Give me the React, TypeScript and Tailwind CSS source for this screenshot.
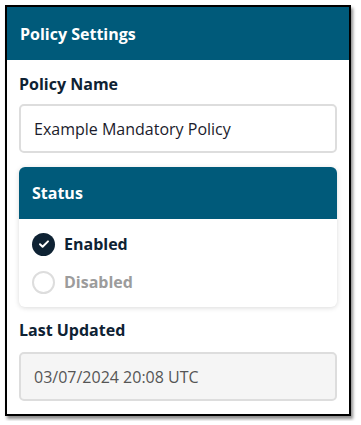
import { useState } from "react";

const font = { fontFamily: '"Open Sans", "Liberation Sans", sans-serif' };

const Radio = ({
  checked,
  label,
  onClick,
}: {
  checked: boolean;
  label: string;
  onClick: () => void;
}) => (
  <button onClick={onClick} className="flex items-center gap-[9px] h-6 outline-none">
    {checked ? (
      <span className="w-[23px] h-[23px] rounded-full bg-[#0e2233] flex items-center justify-center">
        <svg width="12" height="12" viewBox="0 0 12 12" fill="none">
          <path d="M2 6.2l2.6 2.6L10 3.4" stroke="white" strokeWidth="2" strokeLinecap="round" strokeLinejoin="round" />
        </svg>
      </span>
    ) : (
      <span className="w-[23px] h-[23px] rounded-full border-2 border-[#dddddd] bg-white" />
    )}
    <span className={`text-base font-bold ${checked ? "text-[#0e2233]" : "text-[#9c9c9c]"}`}>{label}</span>
  </button>
);

const App = () => {
  const [enabled, setEnabled] = useState(true);
  const [name, setName] = useState("Example Mandatory Policy");

  return (
    <div className="p-[5px] bg-white" style={font}>
      <div className="w-[346px] border-2 border-black bg-white shadow-[2px_3px_3px_rgba(0,0,0,0.45)]">
        <div className="h-[53px] bg-[#005a7a] px-[13px] flex items-center">
          <h2 className="text-white font-bold text-base">Policy Settings</h2>
        </div>
        <div className="px-[12px] pb-[13px]">
          <label className="block mt-[13px] text-base font-bold leading-[22px] text-[#0e2233]">Policy Name</label>
          <input
            value={name}
            onChange={e => setName(e.target.value)}
            className="mt-[9px] w-full h-[49px] border-2 border-[#dddddd] rounded-[5px] px-[13px] text-base text-[#1b1b2b] outline-none"
          />
          <div className="mt-[14px] rounded-[6px] bg-white shadow-[0_1px_5px_rgba(0,0,0,0.15)] overflow-hidden">
            <div className="h-[52px] bg-[#005a7a] px-[13px] flex items-center">
              <h3 className="text-white font-bold text-base">Status</h3>
            </div>
            <div className="px-[13px] pt-[13px] pb-[13px] flex flex-col items-start gap-[14px]">
              <Radio checked={enabled} label="Enabled" onClick={() => setEnabled(true)} />
              <Radio checked={!enabled} label="Disabled" onClick={() => setEnabled(false)} />
            </div>
          </div>
          <label className="block mt-[12px] text-base font-bold leading-[22px] text-[#0e2233]">Last Updated</label>
          <div className="mt-[11px] h-[49px] border-2 border-[#dddddd] rounded-[5px] bg-[#f5f5f5] px-[13px] flex items-center text-base text-[#555555]">
            03/07/2024 20:08 UTC
          </div>
        </div>
      </div>
    </div>
  );
};

export default App;
